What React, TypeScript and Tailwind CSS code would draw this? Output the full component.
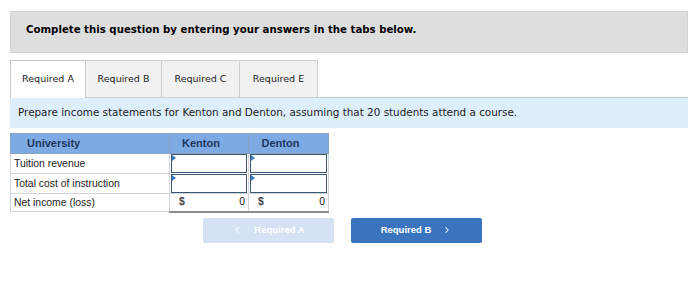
import { ChevronLeft, ChevronRight } from "lucide-react";

const verdana = { fontFamily: '"DejaVu Sans", Verdana, sans-serif' };

function InputCell() {
  return (
    <td className="relative h-[20px] border-x border-gray-300 p-0">
      <div className="relative mx-[1px] h-[19px] border-[1.5px] border-[#3d5670] bg-white">
        <span className="absolute left-0 top-0 h-0 w-0 border-y-[3px] border-l-[4px] border-y-transparent border-l-[#3a78c9]" />
      </div>
    </td>
  );
}

export default function App() {
  return (
    <div className="min-h-[283px] w-[700px] bg-white pt-[11px] pl-[10px]">
      <div className="w-[678px]">
        {/* Header */}
        <div className="flex h-[42px] items-center border border-[#d4d4d4] bg-[#dedede] pb-[4px] pl-[15px]">
          <span className="text-[10.2px] font-bold text-black" style={verdana}>
            Complete this question by entering your answers in the tabs below.
          </span>
        </div>

        {/* Tabs */}
        <div className="mt-[7px] flex h-[38px] items-stretch" style={verdana}>
          <div className="relative z-10 flex w-[76px] items-center justify-center border border-b-0 border-[#c8c8c8] bg-white text-[9.5px] text-[#222]">
            Required A
          </div>
          <div className="flex w-[76px] items-center justify-center border border-l-0 border-[#d0d0d0] bg-[#f1f1f1] text-[9.5px] text-[#222]">
            Required B
          </div>
          <div className="flex w-[78px] items-center justify-center border border-l-0 border-[#d0d0d0] bg-[#f1f1f1] text-[9.5px] text-[#222]">
            Required C
          </div>
          <div className="flex w-[78px] items-center justify-center border border-l-0 border-[#d0d0d0] bg-[#f1f1f1] text-[9.5px] text-[#222]">
            Required E
          </div>
        </div>

        {/* Instruction band */}
        <div className="-mt-px flex h-[31px] items-center border-t border-[#b9c8d6] bg-[#ddeefc] pl-[8px]">
          <span className="text-[10.4px] text-[#222]" style={verdana}>
            Prepare income statements for Kenton and Denton, assuming that 20 students attend a course.
          </span>
        </div>

        {/* Table */}
        <table
          className="mt-[5px] w-[318px] table-fixed border-collapse text-[10.4px] text-[#222]"
          style={{ fontFamily: '"Liberation Sans", Arial, sans-serif' }}
        >
          <colgroup>
            <col className="w-[159px]" />
            <col className="w-[79px]" />
            <col className="w-[80px]" />
          </colgroup>
          <thead>
            <tr className="h-[20px] bg-[#7eaae3] font-bold text-[#1c3660]">
              <th className="border border-[#8aa2bf] pl-[16px] text-left text-[11px] font-bold">University</th>
              <th className="border border-[#8aa2bf] pr-[16px] text-center text-[11px] font-bold">Kenton</th>
              <th className="border border-[#8aa2bf] pr-[16px] text-center text-[11px] font-bold">Denton</th>
            </tr>
          </thead>
          <tbody>
            <tr className="h-[20px]">
              <td className="border border-gray-300 pl-[3px]">Tuition revenue</td>
              <InputCell />
              <InputCell />
            </tr>
            <tr className="h-[20px]">
              <td className="border border-gray-300 pl-[3px]">Total cost of instruction</td>
              <InputCell />
              <InputCell />
            </tr>
            <tr className="h-[18px]">
              <td className="border border-gray-300 pl-[3px]">Net income (loss)</td>
              <td className="border border-gray-300 border-b-2 border-b-[#8a8a8a] px-[3px]">
                <div className="flex justify-between pl-[6px]">
                  <span className="font-bold text-[#444]">$</span>
                  <span>0</span>
                </div>
              </td>
              <td className="border border-gray-300 border-b-2 border-b-[#8a8a8a] px-[3px]">
                <div className="flex justify-between pl-[6px]">
                  <span className="font-bold text-[#444]">$</span>
                  <span>0</span>
                </div>
              </td>
            </tr>
          </tbody>
        </table>

        {/* Nav buttons */}
        <div
          className="mt-[5px] flex gap-[17px] pl-[193px]"
          style={{ fontFamily: '"Liberation Sans", Arial, sans-serif' }}
        >
          <button className="flex h-[25px] w-[131px] items-center justify-center gap-[12px] rounded-[2px] bg-[#d5e2f3] text-[9.5px] font-bold text-white">
            <ChevronLeft size={10} strokeWidth={2.5} />
            Required A
          </button>
          <button className="flex h-[25px] w-[131px] items-center justify-center gap-[11px] rounded-[2px] bg-[#3a74bf] text-[9.5px] font-bold text-white">
            Required B
            <ChevronRight size={10} strokeWidth={2.5} />
          </button>
        </div>
      </div>
    </div>
  );
}
